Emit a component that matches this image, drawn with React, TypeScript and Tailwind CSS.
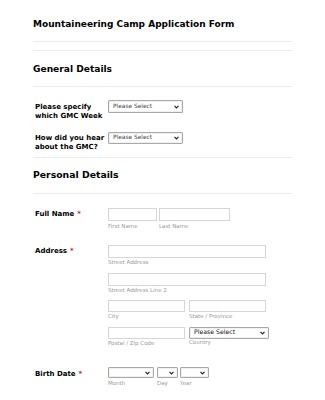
import React from "react";

const Chevron = () => (
  <svg className="absolute right-[3px] top-1/2 -translate-y-1/2 w-[5px] h-[4px]" viewBox="0 0 10 7" fill="none" stroke="#222" strokeWidth={2.4}>
    <path d="M1 1.2l4 4 4-4" />
  </svg>
);

function Select({ w, h = "h-[13px]", text, dark }: { w: string; h?: string; text?: string; dark?: boolean }) {
  return (
    <div className={`relative ${w} ${h} border border-[#a9a9a9] rounded-[1px] bg-white shadow-[inset_0_0_0_1px_#f0f0f0] flex items-center pl-[4px]`}>
      {text && (
        <span className={`${dark ? "text-[6.2px] text-[#111]" : "text-[5.9px] text-[#444]"} leading-none`}>{text}</span>
      )}
      <Chevron />
    </div>
  );
}

function Field({ w, label, h = "h-[13px]" }: { w: string; label: string; h?: string }) {
  return (
    <div className={`${w} shrink-0`}>
      <div className={`${h} border border-[#d6d6d6] bg-white`} />
      <div className="text-[5.5px] leading-[7px] text-[#9a9a9a] mt-[1.5px] whitespace-nowrap">{label}</div>
    </div>
  );
}

function Label({ children, req }: { children: React.ReactNode; req?: boolean }) {
  return (
    <div className="w-[75px] pl-[2px] pr-[2px] text-[7px] leading-[9px] font-bold shrink-0">
      {children}
      {req && <span className="text-[#e02020] ml-[3px]">*</span>}
    </div>
  );
}

export default function App() {
  return (
    <div className="w-[325px] h-[400px] overflow-hidden bg-white text-black font-['DejaVu_Sans',Verdana,sans-serif]">
      <div className="mx-[33px]">
        {/* Header */}
        <div className="pt-[19px] h-[41px] text-[9px] leading-[10px] font-bold">
          Mountaineering Camp Application Form
        </div>
        <div className="border-t border-[#ececec]" />
        <div className="h-[8px]" />
        <div className="border-t border-[#ececec]" />

        {/* General Details */}
        <div className="pt-[12px] h-[35px] text-[9.1px] leading-[12px] font-bold">General Details</div>
        <div className="border-t border-[#ececec]" />

        <div className="pt-[13px]">
          <div className="flex h-[32px]">
            <div className="pt-[2.5px]"><Label>Please specify which GMC Week</Label></div>
            <Select w="w-[75px]" text="Please Select" />
          </div>
          <div className="flex h-[25px]">
            <div className="pt-[2px]"><Label>How did you hear about the GMC?</Label></div>
            <Select w="w-[75px]" h="h-[12px]" text="Please Select" />
          </div>
        </div>
        <div className="border-t border-[#ececec]" />

        {/* Personal Details */}
        <div className="pt-[11px] h-[35px] text-[9.3px] leading-[12px] font-bold">Personal Details</div>
        <div className="border-t border-[#ececec]" />

        {/* Full Name */}
        <div className="flex pt-[14px]">
          <div className="pt-[2px]"><Label req>Full Name</Label></div>
          <div className="flex gap-[2px]">
            <Field w="w-[49px]" label="First Name" />
            <Field w="w-[71px]" label="Last Name" />
          </div>
        </div>

        {/* Address */}
        <div className="flex pt-[15px]">
          <div className="pt-[2px]"><Label req>Address</Label></div>
          <div className="w-[162px]">
            <div className="h-[28px]"><Field w="w-[158px]" label="Street Address" /></div>
            <div className="h-[27px]"><Field w="w-[158px]" label="Street Address Line 2" /></div>
            <div className="h-[27px] flex gap-[4px]">
              <Field w="w-[77px]" h="h-[12px]" label="City" />
              <Field w="w-[77px]" h="h-[12px]" label="State / Province" />
            </div>
            <div className="flex gap-[4px]">
              <Field w="w-[77px]" h="h-[12px]" label="Postal / Zip Code" />
              <div className="w-[80px] shrink-0">
                <Select w="w-[80px]" h="h-[12px]" text="Please Select" dark />
                <div className="text-[5.5px] leading-[7px] text-[#9a9a9a] mt-[0.5px]">Country</div>
              </div>
            </div>
          </div>
        </div>

        {/* Birth Date */}
        <div className="flex pt-[20px]">
          <div className="pt-[3px]"><Label req>Birth Date</Label></div>
          <div className="flex gap-[3px]">
            <div>
              <Select w="w-[46px]" h="h-[11px]" />
              <div className="text-[5.5px] leading-[7px] text-[#9a9a9a] mt-[1.5px]">Month</div>
            </div>
            <div>
              <Select w="w-[21px]" h="h-[11px]" />
              <div className="text-[5.5px] leading-[7px] text-[#9a9a9a] mt-[1.5px]">Day</div>
            </div>
            <div className="-ml-[1px]">
              <Select w="w-[29px]" h="h-[11px]" />
              <div className="text-[5.5px] leading-[7px] text-[#9a9a9a] mt-[1.5px]">Year</div>
            </div>
          </div>
        </div>
      </div>
    </div>
  );
}
